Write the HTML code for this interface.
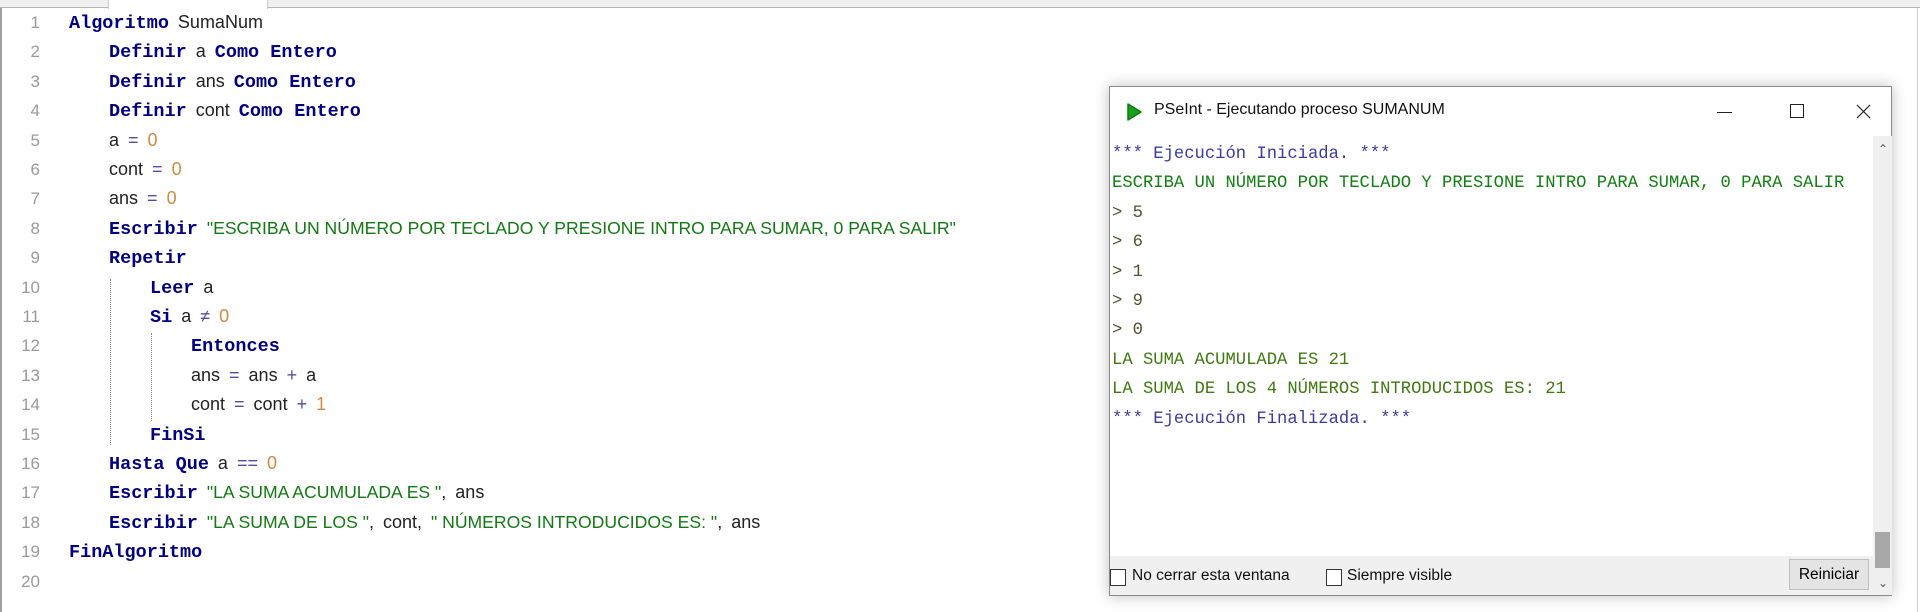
<!DOCTYPE html>
<html><head><meta charset="utf-8"><style>
*{margin:0;padding:0;box-sizing:border-box}
body{width:1920px;height:612px;overflow:hidden;background:#fff;position:relative;font-family:"Liberation Sans",sans-serif}
.tabbar{position:absolute;left:0;top:0;width:1920px;height:8px;background:#f0f0f0;border-bottom:1px solid #b5b5b5}
.tab{position:absolute;left:108px;top:0;width:160px;height:9px;background:#fff;border-left:1px solid #ccc;border-right:1px solid #ccc}
.ed{position:absolute;left:0;top:8px;width:1918px;height:604px;border-left:2px solid #a0a0a0;border-right:1px solid #ccc}
.ln{position:absolute;left:0;width:40px;text-align:right;color:#9a9a9a;font-size:17px;height:29.4px;line-height:29.4px}
.cl{position:absolute;height:29.4px;line-height:29.4px;white-space:pre;font-size:18px;color:#222;word-spacing:4px}
.k{font-family:"Liberation Mono",monospace;font-weight:bold;color:#000080;font-size:18.5px;word-spacing:0}
.n{color:#d08a40}
.o{color:#5a4aa0}
.s{color:#127a12;font-size:17.6px;word-spacing:0}
.g{position:absolute;border-left:1px dotted #888;width:0}
.win{position:absolute;left:1109px;top:86px;width:783px;height:510px;background:#f0f0f0;border:1px solid #8a8a8a;box-shadow:0 0 14px rgba(0,0,0,.25)}
.title{position:absolute;left:0;top:0;width:100%;height:49px;background:#fff}
.tt{position:absolute;left:44px;top:14px;font-size:16px;color:#111}
.cons{position:absolute;left:0;top:49px;width:763px;height:420px;background:#fff}
.cs{position:absolute;left:2px;font-family:"Liberation Mono",monospace;font-size:17.2px;white-space:pre;line-height:29.4px;height:29.4px}
.b{color:#3c3ca0}.gr{color:#128012}.in{color:#5a5030}.ol{color:#3f7a10}
.sb{position:absolute;left:763px;top:49px;width:19px;height:459px;background:#f0f0f0}
.thumb{position:absolute;left:2px;top:396px;width:15px;height:36px;background:#a8a8a8}
.cb{position:absolute;top:482px;width:16px;height:17px;border:1px solid #333;background:#fff}
.lab{position:absolute;top:480px;font-size:15.5px;color:#111}
.btn{position:absolute;left:679px;top:472px;width:80px;height:31px;border:1px solid #c0c0c0;background:#e4e4e4;font-size:15.5px;text-align:center;line-height:29px}
</style></head><body>
<div class="tabbar"><div class="tab"></div></div>
<div class="ed"></div>

<div class="g" style="left:110px;top:279px;height:166px"></div>
<div class="g" style="left:151px;top:333px;height:88px"></div>

<div class="ln" style="top:8px">1</div>
<div class="ln" style="top:37.4px">2</div>
<div class="ln" style="top:66.8px">3</div>
<div class="ln" style="top:96.2px">4</div>
<div class="ln" style="top:125.6px">5</div>
<div class="ln" style="top:155px">6</div>
<div class="ln" style="top:184.4px">7</div>
<div class="ln" style="top:213.8px">8</div>
<div class="ln" style="top:243.2px">9</div>
<div class="ln" style="top:272.6px">10</div>
<div class="ln" style="top:302px">11</div>
<div class="ln" style="top:331.4px">12</div>
<div class="ln" style="top:360.8px">13</div>
<div class="ln" style="top:390.2px">14</div>
<div class="ln" style="top:419.6px">15</div>
<div class="ln" style="top:449px">16</div>
<div class="ln" style="top:478.4px">17</div>
<div class="ln" style="top:507.8px">18</div>
<div class="ln" style="top:537.2px">19</div>
<div class="ln" style="top:566.6px">20</div>

<div class="cl" style="top:8px;left:69px"><span class="k">Algoritmo</span> SumaNum</div>
<div class="cl" style="top:37.4px;left:109px"><span class="k">Definir</span> a <span class="k">Como Entero</span></div>
<div class="cl" style="top:66.8px;left:109px"><span class="k">Definir</span> ans <span class="k">Como Entero</span></div>
<div class="cl" style="top:96.2px;left:109px"><span class="k">Definir</span> cont <span class="k">Como Entero</span></div>
<div class="cl" style="top:125.6px;left:109px">a <span class="o">=</span> <span class="n">0</span></div>
<div class="cl" style="top:155px;left:109px">cont <span class="o">=</span> <span class="n">0</span></div>
<div class="cl" style="top:184.4px;left:109px">ans <span class="o">=</span> <span class="n">0</span></div>
<div class="cl" style="top:213.8px;left:109px"><span class="k">Escribir</span> <span class="s">"ESCRIBA UN NÚMERO POR TECLADO Y PRESIONE INTRO PARA SUMAR, 0 PARA SALIR"</span></div>
<div class="cl" style="top:243.2px;left:109px"><span class="k">Repetir</span></div>
<div class="cl" style="top:272.6px;left:150px"><span class="k">Leer</span> a</div>
<div class="cl" style="top:302px;left:150px"><span class="k">Si</span> a <span class="o">≠</span> <span class="n">0</span></div>
<div class="cl" style="top:331.4px;left:191px"><span class="k">Entonces</span></div>
<div class="cl" style="top:360.8px;left:191px">ans <span class="o">=</span> ans <span class="o">+</span> a</div>
<div class="cl" style="top:390.2px;left:191px">cont <span class="o">=</span> cont <span class="o">+</span> <span class="n">1</span></div>
<div class="cl" style="top:419.6px;left:150px"><span class="k">FinSi</span></div>
<div class="cl" style="top:449px;left:109px"><span class="k">Hasta Que</span> a <span class="o">==</span> <span class="n">0</span></div>
<div class="cl" style="top:478.4px;left:109px"><span class="k">Escribir</span> <span class="s">"LA SUMA ACUMULADA ES "</span>, ans</div>
<div class="cl" style="top:507.8px;left:109px"><span class="k">Escribir</span> <span class="s">"LA SUMA DE LOS "</span>, cont, <span class="s">" NÚMEROS INTRODUCIDOS ES: "</span>, ans</div>
<div class="cl" style="top:537.2px;left:69px"><span class="k">FinAlgoritmo</span></div>

<div class="win">
 <div class="title">
  <svg style="position:absolute;left:15px;top:15px" width="18" height="20" viewBox="0 0 18 20"><path d="M3 2 L16 10 L3 18 Z" fill="#1aa01a" stroke="#0c7a0c" stroke-width="1.5" stroke-linejoin="round"/></svg>
  <div class="tt">PSeInt - Ejecutando proceso SUMANUM</div>
  <div style="position:absolute;left:607px;top:25px;width:15px;height:1px;background:#222"></div>
  <div style="position:absolute;left:680px;top:17px;width:14px;height:14px;border:1px solid #222"></div>
  <svg style="position:absolute;left:746px;top:17px" width="15" height="15" viewBox="0 0 15 15"><path d="M1 1L14 14M14 1L1 14" stroke="#222" stroke-width="1.2"/></svg>
 </div>
 <div class="cons">
  <div class="cs b" style="top:4px">*** Ejecución Iniciada. ***</div>
  <div class="cs gr" style="top:33.4px">ESCRIBA UN NÚMERO POR TECLADO Y PRESIONE INTRO PARA SUMAR, 0 PARA SALIR</div>
  <div class="cs in" style="top:62.8px">&gt; 5</div>
  <div class="cs in" style="top:92.2px">&gt; 6</div>
  <div class="cs in" style="top:121.6px">&gt; 1</div>
  <div class="cs in" style="top:151px">&gt; 9</div>
  <div class="cs in" style="top:180.4px">&gt; 0</div>
  <div class="cs ol" style="top:209.8px">LA SUMA ACUMULADA ES 21</div>
  <div class="cs ol" style="top:239.2px">LA SUMA DE LOS 4 NÚMEROS INTRODUCIDOS ES: 21</div>
  <div class="cs b" style="top:268.6px">*** Ejecución Finalizada. ***</div>
 </div>
 <div class="sb">
  <div style="position:absolute;left:5px;top:6px;font-size:12px;color:#555">&#8963;</div>
  <div class="thumb"></div>
  <div style="position:absolute;left:5px;top:440px;font-size:12px;color:#555">&#8964;</div>
 </div>
 <div class="cb" style="left:0px"></div><div class="lab" style="left:22px">No cerrar esta ventana</div>
 <div class="cb" style="left:216px"></div><div class="lab" style="left:237px">Siempre visible</div>
 <div class="btn">Reiniciar</div>
</div>
</body></html>
